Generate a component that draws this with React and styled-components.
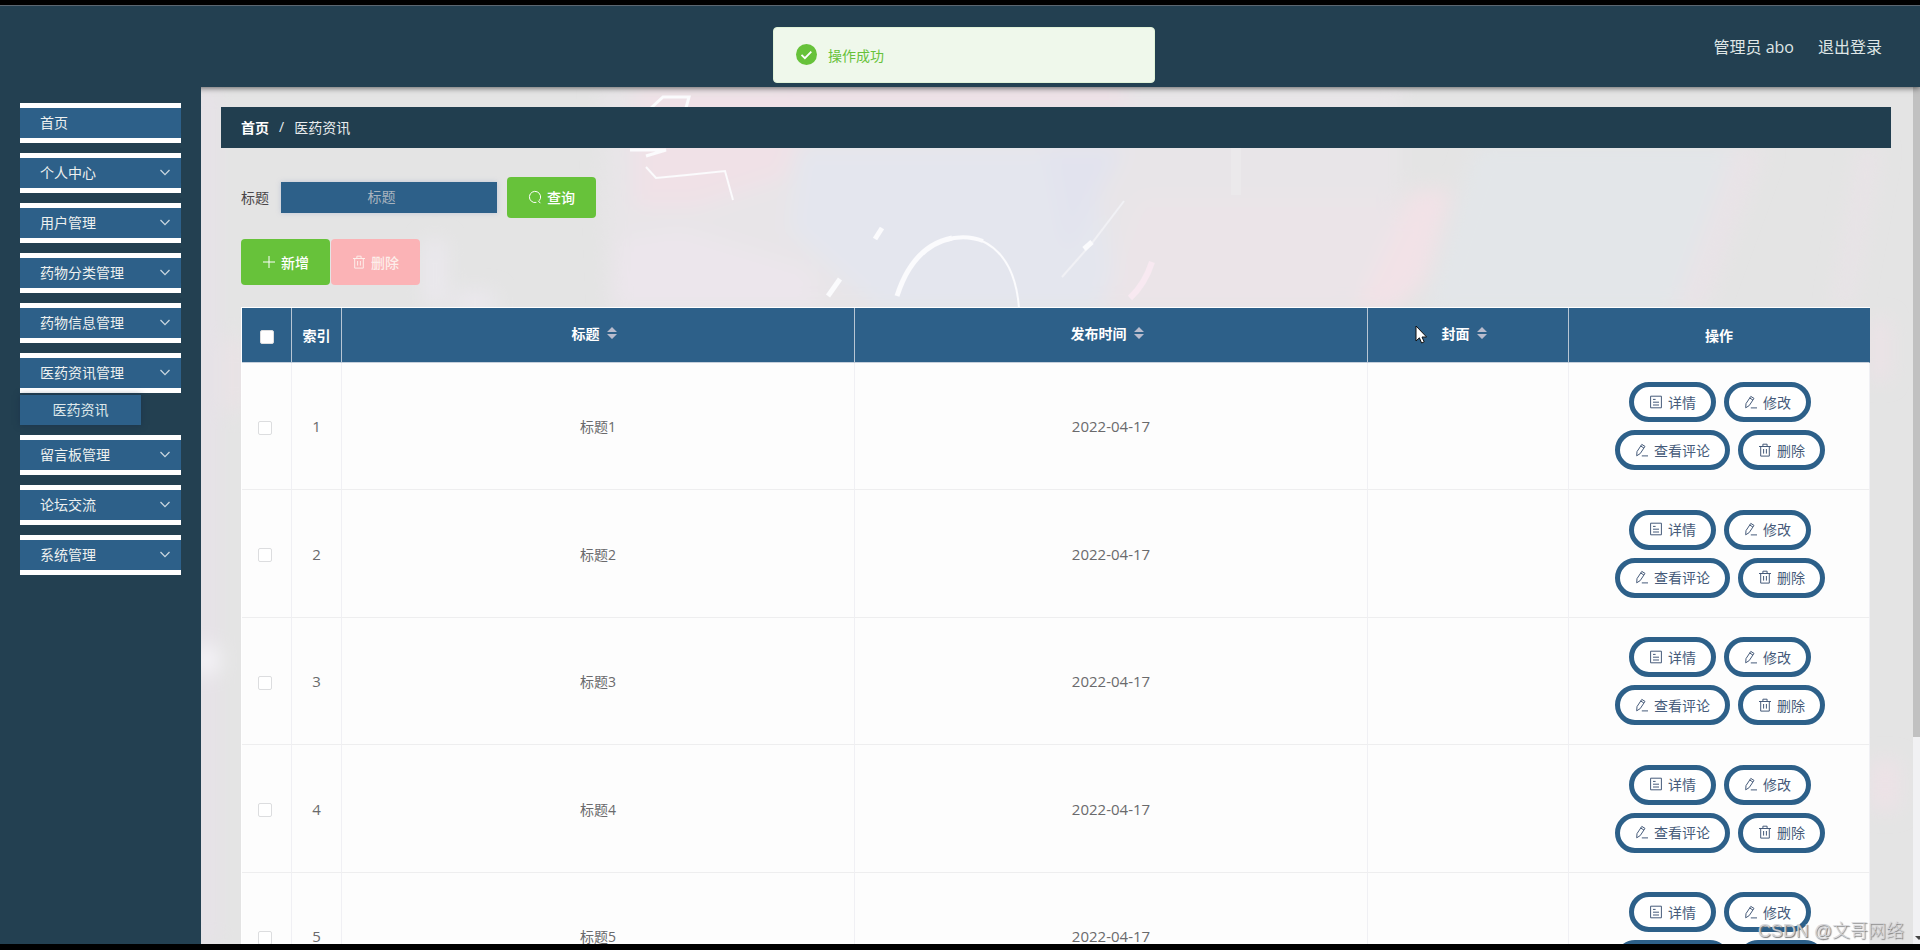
import React from "react";
import styled, { createGlobalStyle, css } from "styled-components";

const navy = "#234051";
const blue = "#2d6089";
const green = "#67c23a";

const GlobalStyle = createGlobalStyle`
  *, *::before, *::after { box-sizing: border-box; }
  body {
    margin: 0;
    background: #000;
    font-family: "Open Sans", "Noto Sans CJK SC", sans-serif;
    font-size: 14px;
    color: #606266;
  }
  button, input { font: inherit; }
  a { color: inherit; text-decoration: none; }
`;

const Screen = styled.div`
  position: relative;
  display: flex;
  flex-direction: column;
  height: 100vh;
  overflow: hidden;
  border-top: 5px solid #000;
  border-bottom: 6px solid #000;
`;

const Header = styled.header`
  position: relative;
  z-index: 2;
  flex: none;
  display: flex;
  justify-content: flex-end;
  gap: 24px;
  height: 82px;
  padding: 28px 38px 0 0;
  border-top: 1px solid #5b6670;
  background: ${navy};
  box-shadow: 0 1px 6px rgba(0, 0, 0, 0.6);
  color: #dfe6e6;
  font-size: 16px;
  line-height: 26px;
`;

const Body = styled.div`
  flex: 1;
  min-height: 0;
  display: flex;
`;

const Sidebar = styled.nav`
  position: relative;
  z-index: 3;
  flex: none;
  width: 201px;
  padding: 16px 20px;
  background: ${navy};
`;

const MenuList = styled.ul`
  display: flex;
  flex-direction: column;
  gap: 10px;
  margin: 0;
  padding: 0;
  list-style: none;
`;

const MenuButton = styled.button`
  display: flex;
  align-items: center;
  justify-content: space-between;
  width: 100%;
  height: 40px;
  padding: 0 10px 0 20px;
  border: solid #fff;
  border-width: 5px 0;
  background: ${blue};
  color: #eef1f0;
  line-height: 30px;
`;

const SubMenuLink = styled.a`
  display: block;
  width: 121px;
  height: 30px;
  margin-top: 2px;
  background: ${blue};
  box-shadow: 0 0 6px rgba(20, 40, 70, 0.5);
  color: #dfe8ea;
  line-height: 30px;
  text-align: center;
`;

const Main = styled.main`
  position: relative;
  flex: 1;
  min-width: 0;
  overflow: hidden;
  padding: 20px 22px 0 20px;
  background: #e4e4e4;
`;

const Backdrop = styled.svg`
  position: absolute;
  inset: 0;
  width: 100%;
  height: 100%;
`;

const Content = styled.div`
  position: relative;
`;

const Breadcrumb = styled.nav`
  display: flex;
  align-items: center;
  gap: 10px;
  height: 41px;
  padding: 0 20px 2px;
  background: #213e4f;
  color: #e8ecee;
`;

const HomeLink = styled.a`
  color: #fff;
  font-weight: 700;
`;

const Panel = styled.section`
  padding: 29px 21px 0 20px;
`;

const SearchForm = styled.form`
  display: flex;
  align-items: center;
  height: 41px;
`;

const SearchLabel = styled.label`
  margin-right: 12px;
  padding-bottom: 2px;
  color: #4a4648;
`;

const SearchInput = styled.input`
  width: 216px;
  height: 31px;
  margin-right: 10px;
  padding: 0 30px 2px 15px;
  border: 0;
  background: ${blue};
  box-shadow: 0 0 5px rgba(120, 140, 190, 0.35);
  color: #fff;
  text-align: center;
  &::placeholder { color: #a9b4bf; opacity: 1; }
`;

const ActionButton = styled.button`
  display: inline-flex;
  align-items: center;
  justify-content: center;
  gap: 5px;
  width: 89px;
  height: ${(p) => (p.$tall ? 46 : 41)}px;
  padding: 0 0 1px;
  border: 0;
  border-radius: 4px;
  background: ${(p) => (p.$tone === "danger" ? "#fbb3b6" : green)};
  color: ${(p) => (p.$tone === "danger" ? "#fdeeea" : "#fff")};
  font-weight: 500;
`;

const Toolbar = styled.div`
  display: flex;
  gap: 1px;
  margin: 21px 0 22px;
`;

const Table = styled.table`
  width: 100%;
  table-layout: fixed;
  border-collapse: separate;
  border-spacing: 0;
  border: solid #fff;
  border-width: 1px 0 0 1px;
  background: #fdfdfd;
  text-align: center;
`;

const HeadCell = styled.th`
  height: 55px;
  padding: 0;
  border-right: 1px solid #b7c6d4;
  border-bottom: 1px solid #c6d0dc;
  background: ${blue};
  color: #fff;
  font-weight: 700;
  &:last-child { border-right-color: ${blue}; }
`;

const SortLabel = styled.span`
  display: inline-flex;
  align-items: center;
  gap: 7px;
  padding: 0 8px 4px 0;
`;

const Row = styled.tr`
  height: 128px;
  &:nth-child(odd) { height: 127px; }
`;

const Cell = styled.td`
  padding: 0;
  border-right: 1px solid #f0f0f4;
  border-bottom: 1px solid #eeeeef;
  color: #6a6a6c;
`;

const CheckCell = styled(Cell)`
  padding-right: 3px;
`;

const NumberCell = styled(Cell)`
  font-size: 15px;
`;

const checkboxSkin = css`
  appearance: none;
  width: 14px;
  height: 14px;
  margin: 0;
  border: 1px solid #dcdddf;
  border-radius: 2px;
  background: #fff;
  vertical-align: middle;
`;

const Checkbox = styled.input`
  ${checkboxSkin}
`;

const RowActions = styled.div`
  display: flex;
  flex-wrap: wrap;
  justify-content: center;
  gap: 8px;
  padding: 0 29px 0 31px;
`;

const PillButton = styled.button`
  display: inline-flex;
  align-items: center;
  gap: 5px;
  height: 40px;
  padding: 0 15px 1px;
  border: 5px solid ${blue};
  border-radius: 20px;
  background: #fff;
  color: #465b7a;
  white-space: nowrap;
`;

const ScrollRail = styled.div`
  flex: none;
  display: flex;
  flex-direction: column;
  width: 7px;
  background: #f1f1f3;
`;

const ScrollThumb = styled.div`
  flex: 650;
  background: #c1c1c1;
`;

const ScrollRest = styled.div`
  flex: 207;
  display: flex;
  align-items: flex-end;
  overflow: hidden;
`;

const Toast = styled.div`
  position: absolute;
  z-index: 5;
  top: 22px;
  left: calc(50% - 187px);
  display: flex;
  align-items: center;
  gap: 11px;
  width: 382px;
  height: 56px;
  padding: 0 22px 1px;
  border: 1px solid #e1f3d8;
  border-radius: 4px;
  background: #eff8eb;
  color: ${green};
`;

const Watermark = styled.div`
  position: absolute;
  z-index: 4;
  right: 16px;
  bottom: 0;
  color: rgba(214, 214, 218, 0.9);
  font-family: "Liberation Sans", "Noto Sans CJK SC", sans-serif;
  font-size: 18px;
  font-weight: 300;
  line-height: 26px;
  text-shadow: 1px 1px 1px #777;
`;

const Pointer = styled.svg`
  position: absolute;
  z-index: 4;
  top: 320px;
  left: 1415px;
`;

const iconShapes = {
  search: <path d="M8.400 12.400A5.600 5.600 0 1 1 11.200 10.700M10.200 10.800L12.400 13.200" />,
  plus: <path d="M7 1v12M1 7h12" />,
  trash: <path d="M1 3.5h12M2.7 3.5v9.6h8.6V3.5M4.9 3.2V1.2h4.2v2M5.6 6v4.6M8.4 6v4.6" />,
  tickets: <path d="M1.6 1.2h10.8v11.6H1.6zM4 4.4h2.6M4 7.2h6M4 10h6" />,
  edit: <path d="M2 8.600 6.800 1.400 10 3.400 5.200 10.600 1.700 12.800zM5.700 3l3.200 2M6.800 12.900h6.200" />,
};

function Icon({ name }) {
  return (
    <svg width="14" height="14" viewBox="0 0 14 14" fill="none" stroke="currentColor" aria-hidden="true">
      {iconShapes[name]}
    </svg>
  );
}

function Chevron() {
  return (
    <svg width="12" height="8" viewBox="0 0 12 8" fill="none" stroke="#c9d6df" strokeWidth="1.3" aria-hidden="true">
      <path d="M1.5 1 6 5.6 10.5 1" />
    </svg>
  );
}

function SortIcon() {
  return (
    <svg width="10" height="12" viewBox="0 0 10 12" fill="#b9bccd" aria-hidden="true">
      <path d="M0 5 5 0l5 5zM0 7h10l-5 5z" />
    </svg>
  );
}

function Scenery() {
  return (
    <Backdrop viewBox="201 87 1712 857" preserveAspectRatio="xMinYMin slice" aria-hidden="true">
      <defs>
        <filter id="soft" x="-20%" y="-20%" width="140%" height="140%">
          <feGaussianBlur stdDeviation="10" />
        </filter>
        <filter id="fine">
          <feGaussianBlur stdDeviation="0.7" />
        </filter>
      </defs>
      <g filter="url(#soft)">
        <path fill="#e8e1ea" d="M201 87h14v857h-14z" />
        <path fill="#e8e5e8" d="M600 87h800v223h-790z" />
        <path fill="#f0e1e7" d="M635 87h180l-30 90-90 30-60 0z" />
        <path fill="#f0e0e7" d="M780 87h345v20h-345z" />
        <path fill="#ece6ec" d="M620 240l60-10 130 40 10 40H615z" />
        <path fill="#e4e6ee" d="M800 150h290l30 160H880l-90-80z" />
        <path fill="#e2e3ee" d="M1045 147h80l-60 110z" />
        <path fill="#ebe4e8" d="M1140 200h260l-60 110h-240z" />
        <path fill="#f2e2e7" d="M1412 190h40l-26 90-30 30h-44z" />
        <path fill="#e3e6e9" d="M1475 147h260l-60 163h-250z" />
        <path fill="#e9e3e7" d="M1735 147h30l-60 163h-30zM1860 147h20l-30 163h-16z" />
        <path fill="#eee2e7" d="M228 340h12v70h-12zM1872 320h16v60h-16zM1872 760h26v50h-26z" />
        <path fill="#ece9ef" d="M425 240h20v65h-20zM455 292h40v20h-40z" />
        <circle fill="#f7f5fa" cx="206" cy="660" r="14" />
      </g>
      <g fill="none" stroke="#fbfbfd" filter="url(#fine)">
        <path strokeWidth="3" d="M651 108l12-11h26l-3 11M630 150h36l-20 6" />
        <path strokeWidth="2" d="M646 167l10 11 31-3 38-4 8 29" />
        <path strokeWidth="5" d="M897 296q16-50 55-58" />
        <path strokeWidth="4" d="M945 240q20-6 38 1" />
        <path strokeWidth="2" d="M980 240q35 15 39 68" />
        <path strokeWidth="5" d="M828 296l12-17M875 239l7-11" />
        <path stroke="#f1f1f5" strokeWidth="2" d="M1062 277l30-34 32-42" />
        <path strokeWidth="5" d="M1084 249l8-7" />
        <path stroke="#f8e9f1" strokeWidth="6" d="M1130 298q15-14 22-36" />
        <path stroke="#ebe9eb" strokeWidth="10" d="M1236 147v48" />
      </g>
    </Backdrop>
  );
}

const menu = [
  { label: "首页", leaf: true },
  { label: "个人中心" },
  { label: "用户管理" },
  { label: "药物分类管理" },
  { label: "药物信息管理" },
  { label: "医药资讯管理", child: "医药资讯" },
  { label: "留言板管理" },
  { label: "论坛交流" },
  { label: "系统管理" },
];

const rows = [1, 2, 3, 4, 5].map((n) => ({ id: n, title: `标题${n}`, date: "2022-04-17" }));

const rowActions = [
  { icon: "tickets", label: "详情" },
  { icon: "edit", label: "修改" },
  { icon: "edit", label: "查看评论" },
  { icon: "trash", label: "删除" },
];

function SortableHead({ children }) {
  return (
    <HeadCell scope="col">
      <SortLabel>
        {children}
        <SortIcon />
      </SortLabel>
    </HeadCell>
  );
}

export default function App() {
  return (
    <>
      <GlobalStyle />
      <Screen>
        <Header>
          <span>管理员 abo</span>
          <a href="#logout">退出登录</a>
        </Header>

        <Body>
          <Sidebar>
            <MenuList>
              {menu.map((item) => (
                <li key={item.label}>
                  <MenuButton type="button">
                    {item.label}
                    {!item.leaf && <Chevron />}
                  </MenuButton>
                  {item.child && <SubMenuLink href="#news">{item.child}</SubMenuLink>}
                </li>
              ))}
            </MenuList>
          </Sidebar>

          <Main>
            <Scenery />
            <Content>
              <Breadcrumb>
                <HomeLink href="#home">首页</HomeLink>
                <span>/</span>
                <span>医药资讯</span>
              </Breadcrumb>

              <Panel>
                <SearchForm onSubmit={(e) => e.preventDefault()}>
                  <SearchLabel htmlFor="title">标题</SearchLabel>
                  <SearchInput id="title" type="text" placeholder="标题" />
                  <ActionButton type="submit">
                    <Icon name="search" />
                    查询
                  </ActionButton>
                </SearchForm>

                <Toolbar>
                  <ActionButton type="button" $tall>
                    <Icon name="plus" />
                    新增
                  </ActionButton>
                  <ActionButton type="button" $tall $tone="danger" disabled>
                    <Icon name="trash" />
                    删除
                  </ActionButton>
                </Toolbar>

                <Table>
                  <colgroup>
                    <col style={{ width: 50 }} />
                    <col style={{ width: 50 }} />
                    <col />
                    <col />
                    <col style={{ width: 201 }} />
                    <col style={{ width: 301 }} />
                  </colgroup>
                  <thead>
                    <tr>
                      <HeadCell scope="col">
                        <Checkbox type="checkbox" aria-label="全选" />
                      </HeadCell>
                      <HeadCell scope="col">索引</HeadCell>
                      <SortableHead>标题</SortableHead>
                      <SortableHead>发布时间</SortableHead>
                      <SortableHead>封面</SortableHead>
                      <HeadCell scope="col">操作</HeadCell>
                    </tr>
                  </thead>
                  <tbody>
                    {rows.map((row) => (
                      <Row key={row.id}>
                        <CheckCell>
                          <Checkbox type="checkbox" aria-label={row.title} />
                        </CheckCell>
                        <NumberCell>{row.id}</NumberCell>
                        <Cell>{row.title}</Cell>
                        <NumberCell>{row.date}</NumberCell>
                        <Cell />
                        <Cell>
                          <RowActions>
                            {rowActions.map((action) => (
                              <PillButton type="button" key={action.label}>
                                <Icon name={action.icon} />
                                {action.label}
                              </PillButton>
                            ))}
                          </RowActions>
                        </Cell>
                      </Row>
                    ))}
                  </tbody>
                </Table>
              </Panel>
            </Content>
          </Main>

          <ScrollRail>
            <ScrollThumb />
            <ScrollRest>
              <svg width="7" height="10" viewBox="0 0 7 10" aria-hidden="true">
                <path fill="#444" d="M2 2h8L6 6z" />
              </svg>
            </ScrollRest>
          </ScrollRail>
        </Body>

        <Toast role="status">
          <svg width="21" height="21" viewBox="0 0 21 21" aria-hidden="true">
            <circle cx="10.5" cy="10.5" r="10.5" fill={green} />
            <path d="M5.5 10.8l3.4 3.4 6.4-6.6" fill="none" stroke="#fff" strokeWidth="1.8" />
          </svg>
          操作成功
        </Toast>

        <Pointer width="13" height="19" viewBox="0 0 13 19" aria-hidden="true">
          <path d="M1 1v15l3.4-3.2L6.6 18l2.6-1.1L7 12h4.6z" fill="#fff" stroke="#111" />
        </Pointer>

        <Watermark>CSDN @文哥网络</Watermark>
      </Screen>
    </>
  );
}
